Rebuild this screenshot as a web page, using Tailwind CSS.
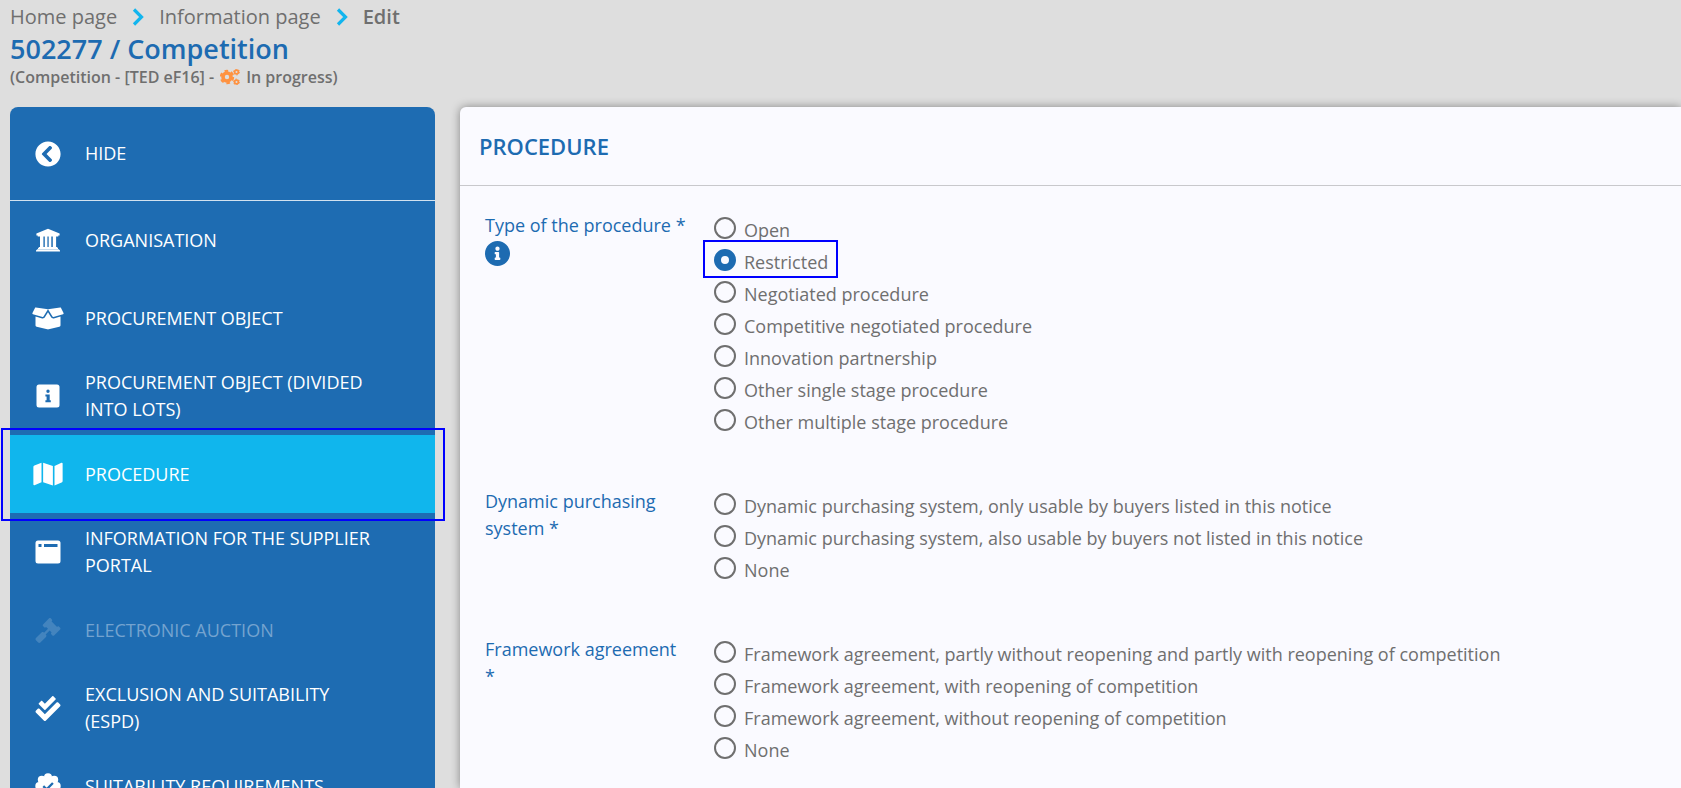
<!DOCTYPE html>
<html lang="en">
<head>
<meta charset="utf-8">
<meta name="viewport" content="width=device-width, initial-scale=1">
<title>502277 / Competition</title>
<script src="https://cdn.jsdelivr.net/npm/@tailwindcss/browser@4"></script>
</head>
<body class="h-screen overflow-hidden bg-[#dedede] font-['Open_Sans',sans-serif] text-lg text-[#6f6f6f]">
<div class="flex h-full flex-col">
  <header class="px-2.5">
    <nav aria-label="Breadcrumb" class="flex h-[34px] items-center gap-[15px] text-xl leading-8">
      <a href="#">Home page</a>
      <svg class="h-[18px] w-3 text-[#12b5ee]" viewBox="0 0 12 18" fill="none" stroke="currentColor" stroke-width="3.2" aria-hidden="true"><path d="M2 1.5 9.5 9 2 16.5"/></svg>
      <a href="#">Information page</a>
      <svg class="h-[18px] w-3 text-[#12b5ee]" viewBox="0 0 12 18" fill="none" stroke="currentColor" stroke-width="3.2" aria-hidden="true"><path d="M2 1.5 9.5 9 2 16.5"/></svg>
      <span class="font-semibold" aria-current="page">Edit</span>
    </nav>
    <h1 class="pb-1 text-[27px] leading-[30px] font-semibold text-[#1d6bb1]">502277 / Competition</h1>
    <p class="flex items-center text-base leading-[18px] font-semibold">
      <span>(Competition - [TED eF16] -</span>
      <svg class="mx-1.5 h-4 w-5 text-[#ff9240]" viewBox="0 0 20 16" fill="none" stroke="currentColor" aria-hidden="true">
        <circle cx="7" cy="8" r="4" stroke-width="3.6"/>
        <circle cx="7" cy="8" r="6.2" stroke-width="2" stroke-dasharray="3.6 2.9"/>
        <circle cx="16.5" cy="3" r="1.900" stroke-width="1.800"/>
        <circle cx="16.5" cy="3" r="2.900" stroke-width="1" stroke-dasharray="1.500 1.540"/>
        <circle cx="16.5" cy="13" r="1.900" stroke-width="1.800"/>
        <circle cx="16.5" cy="13" r="2.900" stroke-width="1" stroke-dasharray="1.500 1.540"/>
      </svg>
      <span>In progress)</span>
    </p>
  </header>

  <div class="mt-[21px] flex min-h-0 flex-1 gap-[25px] pl-2.5">
    <nav aria-label="Sections" class="w-[425px] shrink-0 rounded-t-lg bg-[#1e6cb2] leading-[27px] text-white">
      <button type="button" class="flex h-[94px] w-full items-center gap-[11px] border-b border-white/80 pr-14 pl-3 text-left">
        <svg class="h-[26px] w-[52px] shrink-0" viewBox="0 0 512 512" fill="currentColor" aria-hidden="true"><path d="M256 504C119 504 8 393 8 256S119 8 256 8s248 111 248 248-111 248-248 248zM142.100 273l135.500 135.500c9.400 9.400 24.600 9.400 33.900 0l17-17c9.400-9.400 9.400-24.600 0-33.900L226.900 256l101.600-101.600c9.400-9.400 9.400-24.600 0-33.900l-17-17c-9.400-9.400-24.600-9.400-33.900 0L142.100 239c-9.400 9.400-9.400 24.600 0 34z"/></svg>
        <span>HIDE</span>
      </button>
      <ul>
        <li><a href="#" class="flex h-[78px] items-center gap-[11px] pr-14 pl-3">
          <svg class="h-6 w-[52px] shrink-0" viewBox="0 0 24 24" fill="currentColor" aria-hidden="true"><path d="M12 .8 23.600 5.500V7.500H22.300V8.600H1.700V7.500H.4V5.500ZM4 8.600h3.400v10.500H4ZM8.800 8.600h2.600v10.500H8.800ZM12.700 8.600h2.600v10.500h-2.600ZM16.800 8.600h3.300v10.500h-3.300ZM3 19.100h18.200v.6H22V21H2v-1.300h1ZM1.300 21.300h21.400L24 22.600v1H0v-1Z"/></svg>
          <span>ORGANISATION</span></a></li>
        <li><a href="#" class="flex h-[78px] items-center gap-[11px] pr-14 pl-3">
          <svg class="h-[25px] w-[52px] shrink-0" viewBox="0 0 640 512" fill="currentColor" aria-hidden="true"><path d="M425.700 256c-16.900 0-32.800-9-41.400-23.400L320 126l-64.200 106.600c-8.700 14.500-24.600 23.500-41.500 23.500-4.500 0-9-.6-13.300-1.900L64 215v178c0 14.700 10 27.500 24.200 31l216.200 54.100c10.200 2.500 20.900 2.500 31 0L551.800 424c14.200-3.600 24.200-16.400 24.200-31V215l-137 39.100c-4.300 1.300-8.800 1.900-13.300 1.900zm212.600-112.200L586.800 41c-3.100-6.200-9.800-9.800-16.700-8.900L320 64l91.700 152.100c3.800 6.300 11.400 9.300 18.500 7.300l197.900-56.500c9.900-2.900 14.700-13.900 10.200-23.100zM53.200 41L1.700 143.800c-4.600 9.200.3 20.200 10.100 23l197.900 56.500c7.100 2 14.700-1 18.500-7.300L320 64 69.800 32.100c-6.900-.8-13.500 2.700-16.600 8.900z"/></svg>
          <span>PROCUREMENT OBJECT</span></a></li>
        <li><a href="#" class="flex h-[78px] items-center gap-[11px] pr-14 pl-3">
          <svg class="h-6 w-[52px] shrink-0" viewBox="0 0 24 24" aria-hidden="true"><rect x=".5" y=".5" width="23" height="23" rx="2.500" fill="#fff"/><path fill="#1e6cb2" d="M10.300 7.200a1.700 1.700 0 1 1 3.400 0 1.700 1.700 0 0 1-3.400 0ZM9.400 10.500h4.300v5.700h1.100v2.100H9.400v-2.100h1.200v-3.600H9.400Z"/></svg>
          <span>PROCUREMENT OBJECT (DIVIDED INTO LOTS)</span></a></li>
        <li><a href="#" aria-current="true" class="relative flex h-[78px] items-center gap-[11px] bg-[#10b6ed] pr-14 pl-3">
          <svg class="h-[26px] w-[52px] shrink-0" viewBox="0 0 576 512" fill="currentColor" aria-hidden="true"><path d="M0 117.660v346.320c0 11.320 11.430 19.060 21.940 14.860L160 416V32L20.120 87.950A32.006 32.006 0 0 0 0 117.660zM192 416l192 64V96L192 32v384zM554.060 33.160L416 96v384l139.880-55.950A31.996 31.996 0 0 0 576 394.340V48.020c0-11.320-11.430-19.060-21.940-14.860z"/></svg>
          <span>PROCEDURE</span>
          <span class="pointer-events-none absolute -top-[7px] -right-2.5 -bottom-2 -left-[9px] border-2 border-[#0000ff]"></span></a></li>
        <li><a href="#" class="flex h-[78px] items-center gap-[11px] pr-14 pl-3">
          <svg class="h-6 w-[52px] shrink-0" viewBox="0 0 26 24" aria-hidden="true"><rect x=".5" y=".5" width="25" height="23" rx="2.500" fill="#fff"/><path fill="#1e6cb2" d="M3.500 4h3v3h-3ZM9 4h13.500v3H9Z"/></svg>
          <span>INFORMATION FOR THE SUPPLIER PORTAL</span></a></li>
        <li><a href="#" aria-disabled="true" class="flex h-[78px] items-center gap-[11px] pr-14 pl-3">
          <svg class="h-[25px] w-[52px] shrink-0 text-[#4384be]" viewBox="0 0 512 512" fill="currentColor" aria-hidden="true"><path d="M504.971 199.362l-22.627-22.627c-9.373-9.373-24.569-9.373-33.941 0l-5.657 5.657L329.608 69.255l5.657-5.657c9.373-9.373 9.373-24.569 0-33.941L312.638 7.029c-9.373-9.373-24.569-9.373-33.941 0L154.246 131.480c-9.373 9.373-9.373 24.569 0 33.941l22.627 22.627c9.373 9.373 24.569 9.373 33.941 0l5.657-5.657 39.598 39.598-81.040 81.040-5.657-5.657c-12.497-12.497-32.758-12.497-45.255 0L9.373 412.118c-12.497 12.497-12.497 32.758 0 45.255l45.255 45.255c12.497 12.497 32.758 12.497 45.255 0l114.745-114.745c12.497-12.497 12.497-32.758 0-45.255l-5.657-5.657 81.040-81.040 39.598 39.598-5.657 5.657c-9.373 9.373-9.373 24.569 0 33.941l22.627 22.627c9.373 9.373 24.569 9.373 33.941 0l124.451-124.451c9.372-9.372 9.372-24.568 0-33.941z"/></svg>
          <span class="text-[#74a3cf]">ELECTRONIC AUCTION</span></a></li>
        <li><a href="#" class="flex h-[78px] items-center gap-[11px] pr-14 pl-3">
          <svg class="h-[25px] w-[52px] shrink-0" viewBox="0 0 512 512" fill="currentColor" aria-hidden="true"><path d="M505 174.800l-39.600-39.600c-9.400-9.400-24.600-9.400-33.900 0L192 374.700 80.600 263.200c-9.400-9.400-24.600-9.400-33.900 0L7 302.900c-9.400 9.400-9.400 24.600 0 34L175 505c9.400 9.400 24.600 9.400 33.900 0l296-296.200c9.400-9.500 9.400-24.700.1-34zm-324.300 106c6.200 6.300 16.400 6.300 22.600 0l208-208.200c6.200-6.300 6.200-16.400 0-22.600L366.100 4.700c-6.200-6.300-16.400-6.300-22.600 0L192 156.200l-55.400-55.500c-6.200-6.300-16.400-6.300-22.600 0L68.700 146c-6.200 6.300-6.200 16.400 0 22.600l112 112.200z"/></svg>
          <span>EXCLUSION AND SUITABILITY (ESPD)</span></a></li>
        <li><a href="#" class="flex h-[78px] items-center gap-[11px] pr-14 pl-3">
          <svg class="h-[26px] w-[52px] shrink-0" viewBox="0 0 26 26" aria-hidden="true"><g fill="#fff"><circle cx="13" cy="13" r="9.500"/><circle cx="13" cy="4.300" r="4"/><circle cx="19.200" cy="6.800" r="4"/><circle cx="21.700" cy="13" r="4"/><circle cx="19.200" cy="19.200" r="4"/><circle cx="13" cy="21.700" r="4"/><circle cx="6.800" cy="19.200" r="4"/><circle cx="4.300" cy="13" r="4"/><circle cx="6.800" cy="6.800" r="4"/></g><path d="m8.300 13.200 3.300 3.200 6.300-6.400" fill="none" stroke="#1e6cb2" stroke-width="2.300"/></svg>
          <span>SUITABILITY REQUIREMENTS</span></a></li>
      </ul>
    </nav>

    <main class="min-w-0 flex-1 rounded-tl-md bg-[#fafaff] shadow-[0_0_10px_rgba(0,0,0,0.4)]">
      <h2 class="flex h-[79px] items-center border-b border-[#c8c8cc] px-[19px] text-[22px] leading-8 font-semibold text-[#1d6bb1]">PROCEDURE</h2>
      <form class="flex flex-col gap-[50px] pt-[26px] pr-5 pl-[25px]">
        <fieldset class="grid grid-cols-[204px_1fr] gap-x-[25px]" aria-labelledby="type-label">
          <div class="leading-[27px] text-[#1d6bb1]">
            <span id="type-label">Type of the procedure *</span>
            <button type="button" aria-label="Information" class="block pt-0.5"><svg class="size-[25px]" viewBox="8 8 496 496" fill="currentColor" aria-hidden="true"><path d="M256 8C119.043 8 8 119.083 8 256c0 136.997 111.043 248 248 248s248-111.003 248-248C504 119.083 392.957 8 256 8zm0 110c23.196 0 42 18.804 42 42s-18.804 42-42 42-42-18.804-42-42 18.804-42 42-42zm56 254c0 6.627-5.373 12-12 12h-88c-6.627 0-12-5.373-12-12v-24c0-6.627 5.373-12 12-12h12v-64h-12c-6.627 0-12-5.373-12-12v-24c0-6.627 5.373-12 12-12h64c6.627 0 12 5.373 12 12v100h12c6.627 0 12 5.373 12 12v24z"/></svg></button>
          </div>
          <div class="flex flex-col items-start pt-0.5 leading-8">
            <label class="flex gap-2"><input type="radio" name="type" class="mt-[3px] size-[22px] appearance-none rounded-full border-2 border-[#6f6f6f] checked:border-[7px] checked:border-[#1d6bb1]">Open</label>
            <label class="relative flex gap-2"><input type="radio" name="type" checked class="mt-[3px] size-[22px] appearance-none rounded-full border-2 border-[#6f6f6f] checked:border-[7px] checked:border-[#1d6bb1]">Restricted<span class="pointer-events-none absolute -top-1.5 -right-2.5 bottom-0 -left-[11px] border-2 border-[#0000ff]"></span></label>
            <label class="flex gap-2"><input type="radio" name="type" class="mt-[3px] size-[22px] appearance-none rounded-full border-2 border-[#6f6f6f] checked:border-[7px] checked:border-[#1d6bb1]">Negotiated procedure</label>
            <label class="flex gap-2"><input type="radio" name="type" class="mt-[3px] size-[22px] appearance-none rounded-full border-2 border-[#6f6f6f] checked:border-[7px] checked:border-[#1d6bb1]">Competitive negotiated procedure</label>
            <label class="flex gap-2"><input type="radio" name="type" class="mt-[3px] size-[22px] appearance-none rounded-full border-2 border-[#6f6f6f] checked:border-[7px] checked:border-[#1d6bb1]">Innovation partnership</label>
            <label class="flex gap-2"><input type="radio" name="type" class="mt-[3px] size-[22px] appearance-none rounded-full border-2 border-[#6f6f6f] checked:border-[7px] checked:border-[#1d6bb1]">Other single stage procedure</label>
            <label class="flex gap-2"><input type="radio" name="type" class="mt-[3px] size-[22px] appearance-none rounded-full border-2 border-[#6f6f6f] checked:border-[7px] checked:border-[#1d6bb1]">Other multiple stage procedure</label>
          </div>
        </fieldset>
        <fieldset class="grid grid-cols-[204px_1fr] gap-x-[25px]" aria-labelledby="dps-label">
          <div id="dps-label" class="leading-[27px] text-[#1d6bb1]">Dynamic purchasing system *</div>
          <div class="flex flex-col items-start pt-0.5 leading-8">
            <label class="flex gap-2"><input type="radio" name="dps" class="mt-[3px] size-[22px] appearance-none rounded-full border-2 border-[#6f6f6f] checked:border-[7px] checked:border-[#1d6bb1]">Dynamic purchasing system, only usable by buyers listed in this notice</label>
            <label class="flex gap-2"><input type="radio" name="dps" class="mt-[3px] size-[22px] appearance-none rounded-full border-2 border-[#6f6f6f] checked:border-[7px] checked:border-[#1d6bb1]">Dynamic purchasing system, also usable by buyers not listed in this notice</label>
            <label class="flex gap-2"><input type="radio" name="dps" class="mt-[3px] size-[22px] appearance-none rounded-full border-2 border-[#6f6f6f] checked:border-[7px] checked:border-[#1d6bb1]">None</label>
          </div>
        </fieldset>
        <fieldset class="grid grid-cols-[204px_1fr] gap-x-[25px]" aria-labelledby="framework-label">
          <div id="framework-label" class="leading-[27px] text-[#1d6bb1]">Framework agreement *</div>
          <div class="flex flex-col items-start pt-0.5 leading-8">
            <label class="flex gap-2"><input type="radio" name="framework" class="mt-[3px] size-[22px] appearance-none rounded-full border-2 border-[#6f6f6f] checked:border-[7px] checked:border-[#1d6bb1]">Framework agreement, partly without reopening and partly with reopening of competition</label>
            <label class="flex gap-2"><input type="radio" name="framework" class="mt-[3px] size-[22px] appearance-none rounded-full border-2 border-[#6f6f6f] checked:border-[7px] checked:border-[#1d6bb1]">Framework agreement, with reopening of competition</label>
            <label class="flex gap-2"><input type="radio" name="framework" class="mt-[3px] size-[22px] appearance-none rounded-full border-2 border-[#6f6f6f] checked:border-[7px] checked:border-[#1d6bb1]">Framework agreement, without reopening of competition</label>
            <label class="flex gap-2"><input type="radio" name="framework" class="mt-[3px] size-[22px] appearance-none rounded-full border-2 border-[#6f6f6f] checked:border-[7px] checked:border-[#1d6bb1]">None</label>
          </div>
        </fieldset>
      </form>
    </main>
  </div>
</div>
</body>
</html>
